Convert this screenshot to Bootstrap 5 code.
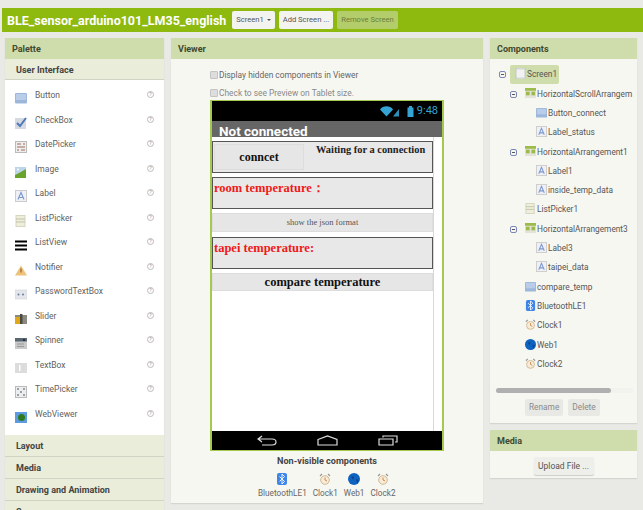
<!DOCTYPE html>
<html lang="en">
<head>
<meta charset="utf-8">
<title>BLE_sensor_arduino101_LM35_english</title>
<link rel="stylesheet" href="https://cdn.jsdelivr.net/npm/bootstrap@5.3.0/dist/css/bootstrap.min.css">
<style>
html,body{height:510px;overflow:hidden}
body{background:#e9e9e6;font-family:Roboto,"Liberation Sans",sans-serif;font-size:9px;color:#555;line-height:1.2}
.topbar{height:24px;margin:8px 0 6px 2px;padding-left:5px;background:#8eb90f;gap:4px}
.app-title{color:#fff;font-weight:700;font-size:12.5px;margin-right:2px;white-space:nowrap}
.top-btn{height:18px;padding:0 4px;font-size:7.6px;line-height:18px;color:#555;background:#f3f3f0;border:0;border-radius:2px;white-space:nowrap}
.top-btn.off{background:#b4cd6b;color:#6b7d3a}
.caret-mark{display:inline-block;border:2.5px solid transparent;border-top-color:#555;border-bottom:0;vertical-align:middle;margin-left:1px}
.panes{align-items:flex-start}
.pane{border:0;border-radius:0;background:#f7f7f2;box-shadow:0 1px 1px #d4d4d0}
.pane>.card-header{flex:none;height:21px;padding:0 7px;line-height:22px;font-size:9px;font-weight:700;color:#3f4a32;background:#cfdcab;border:0;border-radius:0}
.pal-pane{width:159px;margin-left:5px;height:490px;overflow:hidden}
.acc-head{flex:none;height:22px;padding-left:11px;line-height:22px;font-size:9px;font-weight:700;color:#444;background:#e9edd9;border-bottom:1px solid #d0d4c4}
.acc-first{height:21px;line-height:22px}
.pal-list{flex:none;height:355px;padding-top:2px;background:#fff;border-radius:0}
.pal-item{height:24.5px;padding:0 0 0 10px;border:0;background:transparent;color:#5f5f5f;display:flex;align-items:flex-start}
.pal-item>svg{width:12px;height:12px;margin-top:10px;flex:none}
.pal-name{margin-left:8px;margin-top:6px;flex:1;font-size:8.5px;line-height:14px}
.help-dot{width:7px;height:7px;margin:9px 10px 0 0;border:1px solid #bbb;border-radius:50%;font-size:5px;line-height:5px;text-align:center;color:#888}
.view-pane{width:312px;margin-left:7px;height:465px}
.view-body{padding:7px 0 0}
.chk-line{height:18px;margin-left:39px;gap:1px;font-size:8.4px;color:#666}
.chk-line.dim{color:#888}
.chk-box{width:8px;height:8px;background:#ddd;border:1px solid #c4c4c4;border-radius:1px}
.phone{width:234px;height:351px;margin:-2px 0 0 39px;border:2px solid #a3c94f;border-top-width:1px;background:#fff}
.status-row{height:20px;background:#000;color:#35a4d4;font-size:11px;gap:3px;padding-right:4px}
.title-row{height:16px;background:#666;color:#fff;font-size:13.5px;font-weight:700;line-height:20px;padding-left:7px;overflow:hidden}
.form-area{height:294px;padding-top:4px;width:222px;border-right:1px solid #d8d8d8;font-family:"Liberation Serif",serif;font-weight:700}
.arr-box{height:32px;background:#e8e8e8;border:1px solid #555;margin-bottom:4px}
.form-btn{display:flex;align-items:center;justify-content:center;background:#e6e6e6;border:1px solid #ddd}
.connect-btn{width:90px;height:26px;margin:2px 0 0 1px;font-size:12px;color:#111}
.status-lab{flex:1;padding:2px 0 0 12px;font-size:10.4px;color:#222;white-space:nowrap}
.red-lab{padding:2px 0 0 1px;font-size:12.5px;color:#f01818;line-height:16px}
.json-btn{height:19px;margin-bottom:5px;font-size:8.5px;font-weight:400;color:#555}
.cmp-btn{height:18px;font-size:12.5px;color:#111;margin-top:1px}
.nav-row{height:19px;background:#000;padding:0 44px 0 45px}
.nonvis-head{margin-top:5px;text-align:center;font-weight:700;color:#444;font-size:9.1px}
.nonvis{margin-top:6px;gap:6px;margin-left:87px;font-size:8.2px;color:#666}
.nv-item{text-align:center;line-height:11px}
.nv-item svg{display:block;width:12px;height:12px;margin:0 auto 3px}
.comp-col{width:147px;margin-left:7px}
.comp-pane{height:385px}
.tree{flex:none;padding:5px 4px 0 0;height:330px;overflow:hidden}
.tree-row{height:19.3px;display:flex;align-items:center;white-space:nowrap;font-size:8.3px;color:#555;overflow:hidden}
.tree-row svg{width:11px;height:11px;flex:none;margin-right:1px;margin-top:-3px}
.top-row{height:21px}
.lv0{padding-left:9px}.lv1{padding-left:35px}.lv2{padding-left:46px}
.lv1b{padding-left:20px}
.tog{width:7px;height:7px;border:1px solid #7c88b4;border-radius:2px;margin-right:4px;flex:none;margin-top:-1px}
.tog::after{content:"";display:block;height:1px;margin:2px 1px 0;background:#556}
.scr-pill{display:flex;align-items:center;height:19px;width:49px;padding-left:5px;background:#cfdcab;border-radius:2px}
.scroll-track{flex:none;height:5px;margin:-1px 4px 0 6px;background:#f2f2ee}
.scroll-thumb{width:115px;height:5px;background:#b0b0b0;border-radius:3px}
.act-row{margin-top:6px;gap:5px;margin-left:35px}
.act-btn{height:17px;padding:0 4px;border:0;border-radius:2px;background:#e8e8e4;color:#8a8a8a;font-size:8.3px;line-height:17px}
.media-pane{margin-top:7px;height:48px}
.upload-btn{display:block;margin:6px auto 0;height:18px;width:60px;padding:0;border:0;border-radius:2px;background:#eeeeea;color:#555;font-size:8.5px;line-height:18px;box-shadow:0 1px 1px #ccc}
</style>
</head>
<body>
<svg width="0" height="0" class="d-block" aria-hidden="true">
<defs>
<symbol id="i-button" viewBox="0 0 12 12"><rect x="0" y="1" width="12" height="10.500" rx="1" fill="#9db7dc"/><rect x="1" y="2" width="10" height="6" fill="#b9cde8"/></symbol>
<symbol id="i-check" viewBox="0 0 12 12"><rect y="1" width="11" height="11" fill="#d5d9e2"/><path d="M2 6l3 3 6-8" fill="none" stroke="#4f78b8" stroke-width="2"/></symbol>
<symbol id="i-date" viewBox="0 0 12 12"><rect x=".5" y=".5" width="11" height="11" fill="#eee" stroke="#bbb"/><path d="M2 3h2M8 3h2M2 6h8M2 9h2M8 9h2M5 2v2M7 8v2" stroke="#a06a5a"/></symbol>
<symbol id="i-image" viewBox="0 0 12 12"><rect y="1" width="11" height="11" fill="#bcd5ea"/><path d="M0 12V9l4-2 7-4v9z" fill="#6aa32c"/><circle cx="3" cy="3.500" r="1" fill="#fff"/></symbol>
<symbol id="i-label" viewBox="0 0 12 12"><rect x=".5" y=".5" width="11" height="11" fill="#eef0f5" stroke="#ccc"/><path d="M3 9.500L6 2.500l3 7M4.200 7.500h3.600" fill="none" stroke="#7a97d0" stroke-width="1.100"/></symbol>
<symbol id="i-list" viewBox="0 0 12 12"><rect x="1" y=".5" width="9" height="11" fill="#eeeedd" stroke="#d5d5c0"/><path d="M1 4h9M1 7h9" stroke="#c5c5a8"/></symbol>
<symbol id="i-listview" viewBox="0 0 12 12"><path d="M0 2.500h12M0 6.500h12M0 10.500h12" stroke="#000" stroke-width="2"/></symbol>
<symbol id="i-notify" viewBox="0 0 12 12"><path d="M6 1.500L12 11.500H0z" fill="#edc27c"/><path d="M6 4.500v4" stroke="#a8742c" stroke-width="1.500"/></symbol>
<symbol id="i-pass" viewBox="0 0 12 12"><rect y="2" width="12" height="9" fill="#e3e6ec" stroke="#ccc" stroke-width=".5"/><circle cx="3.500" cy="6.500" r="1" fill="#6c7c98"/><circle cx="8" cy="6.500" r="1" fill="#6c7c98"/></symbol>
<symbol id="i-slider" viewBox="0 0 12 12"><rect y="2" width="12" height="9" fill="#8a8a80"/><rect y="4" width="5" height="7" fill="#e0a818"/><rect x="5" y="1" width="2.500" height="10" fill="#4a4a40"/></symbol>
<symbol id="i-spin" viewBox="0 0 12 12"><rect y="1" width="12" height="11" fill="#c9c9c9"/><rect y="1" width="12" height="3.500" fill="#5a6670"/><circle cx="9" cy="3" r="1" fill="#123"/><path d="M2 7h7M2 9.500h7" stroke="#999"/></symbol>
<symbol id="i-text" viewBox="0 0 12 12"><rect y="1" width="12" height="10" fill="#dcdcdc"/><rect x="4" y="3" width="1.500" height="6" fill="#fff"/></symbol>
<symbol id="i-time" viewBox="0 0 12 12"><rect x=".5" y=".5" width="11" height="11" fill="#eee" stroke="#bbb"/><circle cx="3" cy="3" r="1" fill="#789"/><circle cx="9" cy="3" r="1" fill="#789"/><circle cx="3" cy="9" r="1" fill="#789"/><circle cx="9" cy="9" r="1" fill="#789"/><circle cx="6" cy="6" r="1" fill="#789"/></symbol>
<symbol id="i-webv" viewBox="0 0 12 12"><rect y="1" width="12" height="11" fill="#5c9be0"/><circle cx="6.500" cy="6.500" r="3.500" fill="#2f7a1e"/></symbol>
<symbol id="i-arr" viewBox="0 0 12 12"><rect width="12" height="11" fill="#e3e3d8"/><rect width="12" height="3" fill="#9dbb4a"/><rect x="1" y="4" width="4" height="4" fill="#9dbb4a"/><rect x="7" y="4" width="4" height="4" fill="#9dbb4a"/></symbol>
<symbol id="i-screen" viewBox="0 0 12 12"><rect x="1" y="0" width="10" height="12" rx="1" fill="#dfe2e2" stroke="#b8bcb8" stroke-width=".6"/><rect x="2" y="2" width="8" height="8" fill="#f2f2f2"/></symbol>
<symbol id="i-ble" viewBox="0 0 12 12"><rect x="1" width="10" height="12" rx="2" fill="#3f86e8"/><path d="M3.500 3.500l5 5-2.500 2.500v-10l2.500 2.500-5 5" fill="none" stroke="#fff" stroke-width=".9"/></symbol>
<symbol id="i-clock" viewBox="0 0 12 12"><circle cx="6" cy="7" r="4.300" fill="#f8ecd8" stroke="#d0b890"/><path d="M1 3l2-2M11 3L9 1" stroke="#999" stroke-width="1.300"/><path d="M6 4.500V7l2 1" fill="none" stroke="#d08850"/></symbol>
<symbol id="i-web" viewBox="0 0 12 12"><circle cx="6" cy="6" r="6" fill="#0e62c0"/><path d="M3 3l3 1-1 3zM8 6l3 1-2 3z" fill="#0a4488"/></symbol>
</defs>
</svg>

<div class="topbar d-flex align-items-center">
  <span class="app-title">BLE_sensor_arduino101_LM35_english</span>
  <button class="btn top-btn" type="button">Screen1 <span class="caret-mark"></span></button>
  <button class="btn top-btn" type="button">Add Screen ...</button>
  <button class="btn top-btn off" type="button">Remove Screen</button>
</div>

<div class="panes d-flex">
  <section class="card pane pal-pane">
    <div class="card-header">Palette</div>
    <div class="acc-head acc-first">User Interface</div>
    <div class="list-group pal-list">
      <div class="list-group-item pal-item"><svg><use href="#i-button"/></svg><span class="pal-name">Button</span><span class="help-dot">?</span></div>
      <div class="list-group-item pal-item"><svg><use href="#i-check"/></svg><span class="pal-name">CheckBox</span><span class="help-dot">?</span></div>
      <div class="list-group-item pal-item"><svg><use href="#i-date"/></svg><span class="pal-name">DatePicker</span><span class="help-dot">?</span></div>
      <div class="list-group-item pal-item"><svg><use href="#i-image"/></svg><span class="pal-name">Image</span><span class="help-dot">?</span></div>
      <div class="list-group-item pal-item"><svg><use href="#i-label"/></svg><span class="pal-name">Label</span><span class="help-dot">?</span></div>
      <div class="list-group-item pal-item"><svg><use href="#i-list"/></svg><span class="pal-name">ListPicker</span><span class="help-dot">?</span></div>
      <div class="list-group-item pal-item"><svg><use href="#i-listview"/></svg><span class="pal-name">ListView</span><span class="help-dot">?</span></div>
      <div class="list-group-item pal-item"><svg><use href="#i-notify"/></svg><span class="pal-name">Notifier</span><span class="help-dot">?</span></div>
      <div class="list-group-item pal-item"><svg><use href="#i-pass"/></svg><span class="pal-name">PasswordTextBox</span><span class="help-dot">?</span></div>
      <div class="list-group-item pal-item"><svg><use href="#i-slider"/></svg><span class="pal-name">Slider</span><span class="help-dot">?</span></div>
      <div class="list-group-item pal-item"><svg><use href="#i-spin"/></svg><span class="pal-name">Spinner</span><span class="help-dot">?</span></div>
      <div class="list-group-item pal-item"><svg><use href="#i-text"/></svg><span class="pal-name">TextBox</span><span class="help-dot">?</span></div>
      <div class="list-group-item pal-item"><svg><use href="#i-time"/></svg><span class="pal-name">TimePicker</span><span class="help-dot">?</span></div>
      <div class="list-group-item pal-item"><svg><use href="#i-webv"/></svg><span class="pal-name">WebViewer</span><span class="help-dot">?</span></div>
    </div>
    <div class="acc-head">Layout</div>
    <div class="acc-head">Media</div>
    <div class="acc-head">Drawing and Animation</div>
    <div class="acc-head">Sensors</div>
  </section>

  <section class="card pane view-pane">
    <div class="card-header">Viewer</div>
    <div class="view-body">
      <div class="chk-line d-flex align-items-center"><span class="chk-box"></span><span>Display hidden components in Viewer</span></div>
      <div class="chk-line dim d-flex align-items-center"><span class="chk-box"></span><span>Check to see Preview on Tablet size.</span></div>
      <div class="phone">
        <div class="status-row d-flex align-items-center justify-content-end">
          <svg width="20" height="11" viewBox="0 0 20 11"><path d="M0 3.500a8 8 0 0 1 13 0L6.500 10.500z" fill="#35a4d4"/><path d="M13 10.500L19 3v7.500z" fill="#2d8fb8"/></svg>
          <svg width="7" height="11" class="ms-1" viewBox="0 0 7 11"><rect x=".5" y="1.500" width="6" height="9.500" fill="#35a4d4"/><rect x="2" y="0" width="3" height="2" fill="#35a4d4"/></svg>
          <span>9:48</span>
        </div>
        <div class="title-row">Not connected</div>
        <div class="form-area">
          <div class="arr-box d-flex"><div class="form-btn connect-btn">conncet</div><div class="status-lab">Waiting for a connection</div></div>
          <div class="arr-box red-lab">room temperature：</div>
          <div class="form-btn json-btn">show the json format</div>
          <div class="arr-box red-lab">tapei temperature:</div>
          <div class="form-btn cmp-btn">compare temperature</div>
        </div>
        <div class="nav-row d-flex align-items-center justify-content-between">
          <svg width="20" height="11" viewBox="0 0 20 11"><path d="M5 1L1 4l4 3M1 4h14q4 0 4 3t-4 3H5" fill="none" stroke="#ddd" stroke-width="1.200"/></svg>
          <svg width="21" height="11" viewBox="0 0 21 11"><path d="M1 4.500L10.500 1 20 4.500V10H1z" fill="none" stroke="#ddd" stroke-width="1.200"/></svg>
          <svg width="20" height="11" viewBox="0 0 20 11"><path d="M5 2.500V1h14v6h-2M1 4h14v6H1z" fill="none" stroke="#ddd" stroke-width="1.200"/></svg>
        </div>
      </div>
      <div class="nonvis-head">Non-visible components</div>
      <div class="nonvis d-flex">
        <div class="nv-item"><svg><use href="#i-ble"/></svg>BluetoothLE1</div>
        <div class="nv-item"><svg><use href="#i-clock"/></svg>Clock1</div>
        <div class="nv-item"><svg><use href="#i-web"/></svg>Web1</div>
        <div class="nv-item"><svg><use href="#i-clock"/></svg>Clock2</div>
      </div>
    </div>
  </section>

  <div class="comp-col">
    <section class="card pane comp-pane">
      <div class="card-header">Components</div>
      <div class="tree">
        <div class="tree-row top-row lv0"><span class="tog"></span><span class="scr-pill"><svg><use href="#i-screen"/></svg>Screen1</span></div>
        <div class="tree-row lv1b"><span class="tog"></span><svg class="ms-1"><use href="#i-arr"/></svg>HorizontalScrollArrangem</div>
        <div class="tree-row lv2"><svg><use href="#i-button"/></svg>Button_connect</div>
        <div class="tree-row lv2"><svg><use href="#i-label"/></svg>Label_status</div>
        <div class="tree-row lv1b"><span class="tog"></span><svg class="ms-1"><use href="#i-arr"/></svg>HorizontalArrangement1</div>
        <div class="tree-row lv2"><svg><use href="#i-label"/></svg>Label1</div>
        <div class="tree-row lv2"><svg><use href="#i-label"/></svg>inside_temp_data</div>
        <div class="tree-row lv1"><svg><use href="#i-list"/></svg>ListPicker1</div>
        <div class="tree-row lv1b"><span class="tog"></span><svg class="ms-1"><use href="#i-arr"/></svg>HorizontalArrangement3</div>
        <div class="tree-row lv2"><svg><use href="#i-label"/></svg>Label3</div>
        <div class="tree-row lv2"><svg><use href="#i-label"/></svg>taipei_data</div>
        <div class="tree-row lv1"><svg><use href="#i-button"/></svg>compare_temp</div>
        <div class="tree-row lv1"><svg><use href="#i-ble"/></svg>BluetoothLE1</div>
        <div class="tree-row lv1"><svg><use href="#i-clock"/></svg>Clock1</div>
        <div class="tree-row lv1"><svg><use href="#i-web"/></svg>Web1</div>
        <div class="tree-row lv1"><svg><use href="#i-clock"/></svg>Clock2</div>
      </div>
      <div class="scroll-track"><div class="scroll-thumb"></div></div>
      <div class="act-row d-flex">
        <button class="btn act-btn" type="button">Rename</button>
        <button class="btn act-btn" type="button">Delete</button>
      </div>
    </section>
    <section class="card pane media-pane">
      <div class="card-header">Media</div>
      <button class="btn upload-btn" type="button">Upload File ...</button>
    </section>
  </div>
</div>
</body>
</html>
